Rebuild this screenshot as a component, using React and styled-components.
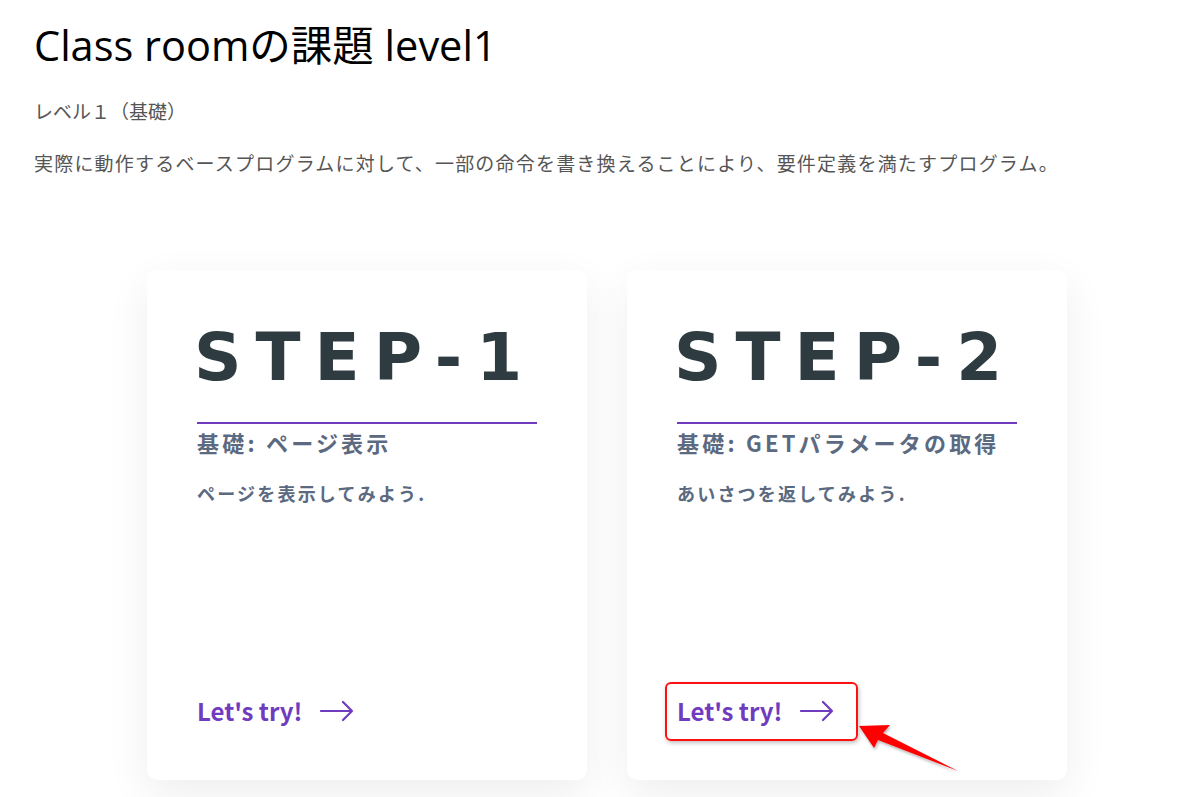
import React from "react";
import styled, { createGlobalStyle } from "styled-components";

const GlobalStyle = createGlobalStyle`
  html, body {
    margin: 0;
    padding: 0;
    background: #ffffff;
  }
  body {
    font-family: "Noto Sans CJK JP", "Open Sans", sans-serif;
  }
`;

const steps = [
  {
    label: "STEP-1",
    title: "基礎: ページ表示",
    text: "ページを表示してみよう.",
  },
  {
    label: "STEP-2",
    title: "基礎: GETパラメータの取得",
    text: "あいさつを返してみよう.",
    highlight: true,
  },
];

const App = () => {
  return (
    <>
      <GlobalStyle />
      <Page>
        <Title>Class roomの課題 level1</Title>
        <Lead>レベル１（基礎）</Lead>
        <Lead $wide>
          実際に動作するベースプログラムに対して、一部の命令を書き換えることにより、要件定義を満たすプログラム。
        </Lead>
        <CardRow>
          {steps.map((step) => (
            <Card key={step.label}>
              <StepLabel>{step.label}</StepLabel>
              <Divider />
              <CardTitle>{step.title}</CardTitle>
              <CardText>{step.text}</CardText>
              <TryLink href="#" $highlight={step.highlight}>
                Let's try!
                <ArrowIcon viewBox="0 0 34 22" fill="none">
                  <path
                    d="M1 11 H32 M23 2 L32 11 L23 20"
                    stroke="currentColor"
                    strokeWidth="2.2"
                    strokeLinecap="round"
                    strokeLinejoin="round"
                  />
                </ArrowIcon>
                {step.highlight && (
                  <Pointer viewBox="0 0 110 60">
                    <defs>
                      <filter id="ps" x="-20%" y="-20%" width="140%" height="160%">
                        <feDropShadow dx="1" dy="2" stdDeviation="1.5" floodColor="#000" floodOpacity="0.3" />
                      </filter>
                    </defs>
                    <polygon
                      points="2,4 33,3 26,11 101,49 21,18 17,26"
                      fill="#ff0000"
                      filter="url(#ps)"
                    />
                  </Pointer>
                )}
              </TryLink>
            </Card>
          ))}
        </CardRow>
      </Page>
    </>
  );
};

export default App;

const Page = styled.div`
  display: flex;
  flex-direction: column;
  padding: 20px 34px 0 34px;
  height: 797px;
  box-sizing: border-box;
  overflow: hidden;
`;

const Title = styled.h1`
  font-family: "Open Sans", "Noto Sans CJK JP", sans-serif;
  font-weight: 400;
  font-size: 41.5px;
  line-height: 50px;
  color: #000;
  margin: 0 0 27px;
`;

const Lead = styled.p`
  font-size: 19px;
  line-height: 27px;
  letter-spacing: ${(p) => (p.$wide ? "1.2px" : "0")};
  color: #555;
  margin: 0 0 25px;
`;

const CardRow = styled.div`
  display: flex;
  gap: 40px;
  margin: 69px 0 0 113px;
`;

const Card = styled.div`
  display: flex;
  flex-direction: column;
  width: 440px;
  height: 510px;
  box-sizing: border-box;
  padding: 55px 50px 53px;
  background: #fff;
  border-radius: 10px;
  box-shadow: 0 14px 44px rgba(0, 0, 0, 0.07);
`;

const StepLabel = styled.div`
  font-family: "DejaVu Sans", sans-serif;
  font-weight: 700;
  font-size: 66px;
  line-height: 1;
  letter-spacing: 14px;
  margin-left: -3px;
  color: #2e3b40;
`;

const Divider = styled.hr`
  width: 340px;
  border: none;
  height: 2px;
  background: #6f3cbf;
  margin: 31px 0 3px;
`;

const CardTitle = styled.h3`
  font-size: 22px;
  font-weight: 700;
  letter-spacing: 3.2px;
  color: #5b6a80;
  margin: 0 0 22px;
  line-height: 1.4;
`;

const CardText = styled.p`
  font-size: 18px;
  font-weight: 700;
  letter-spacing: 2.2px;
  color: #5b6a80;
  margin: 0;
`;

const TryLink = styled.a`
  position: relative;
  margin-top: auto;
  align-self: flex-start;
  display: flex;
  align-items: center;
  gap: 18px;
  font-size: 24px;
  line-height: 32px;
  font-weight: 700;
  color: #6f3cbf;
  text-decoration: none;

  ${(p) =>
    p.$highlight &&
    `
    &::before {
      content: "";
      position: absolute;
      left: -12px;
      right: -24px;
      top: -13px;
      bottom: -14px;
      border: 2px solid #ff1010;
      border-radius: 6px;
      box-shadow: 1px 2px 4px rgba(0, 0, 0, 0.25);
    }
  `}
`;

const ArrowIcon = styled.svg`
  width: 34px;
  height: 22px;
`;

const Pointer = styled.svg`
  position: absolute;
  left: 180px;
  top: 27px;
  width: 110px;
  height: 60px;
`;
